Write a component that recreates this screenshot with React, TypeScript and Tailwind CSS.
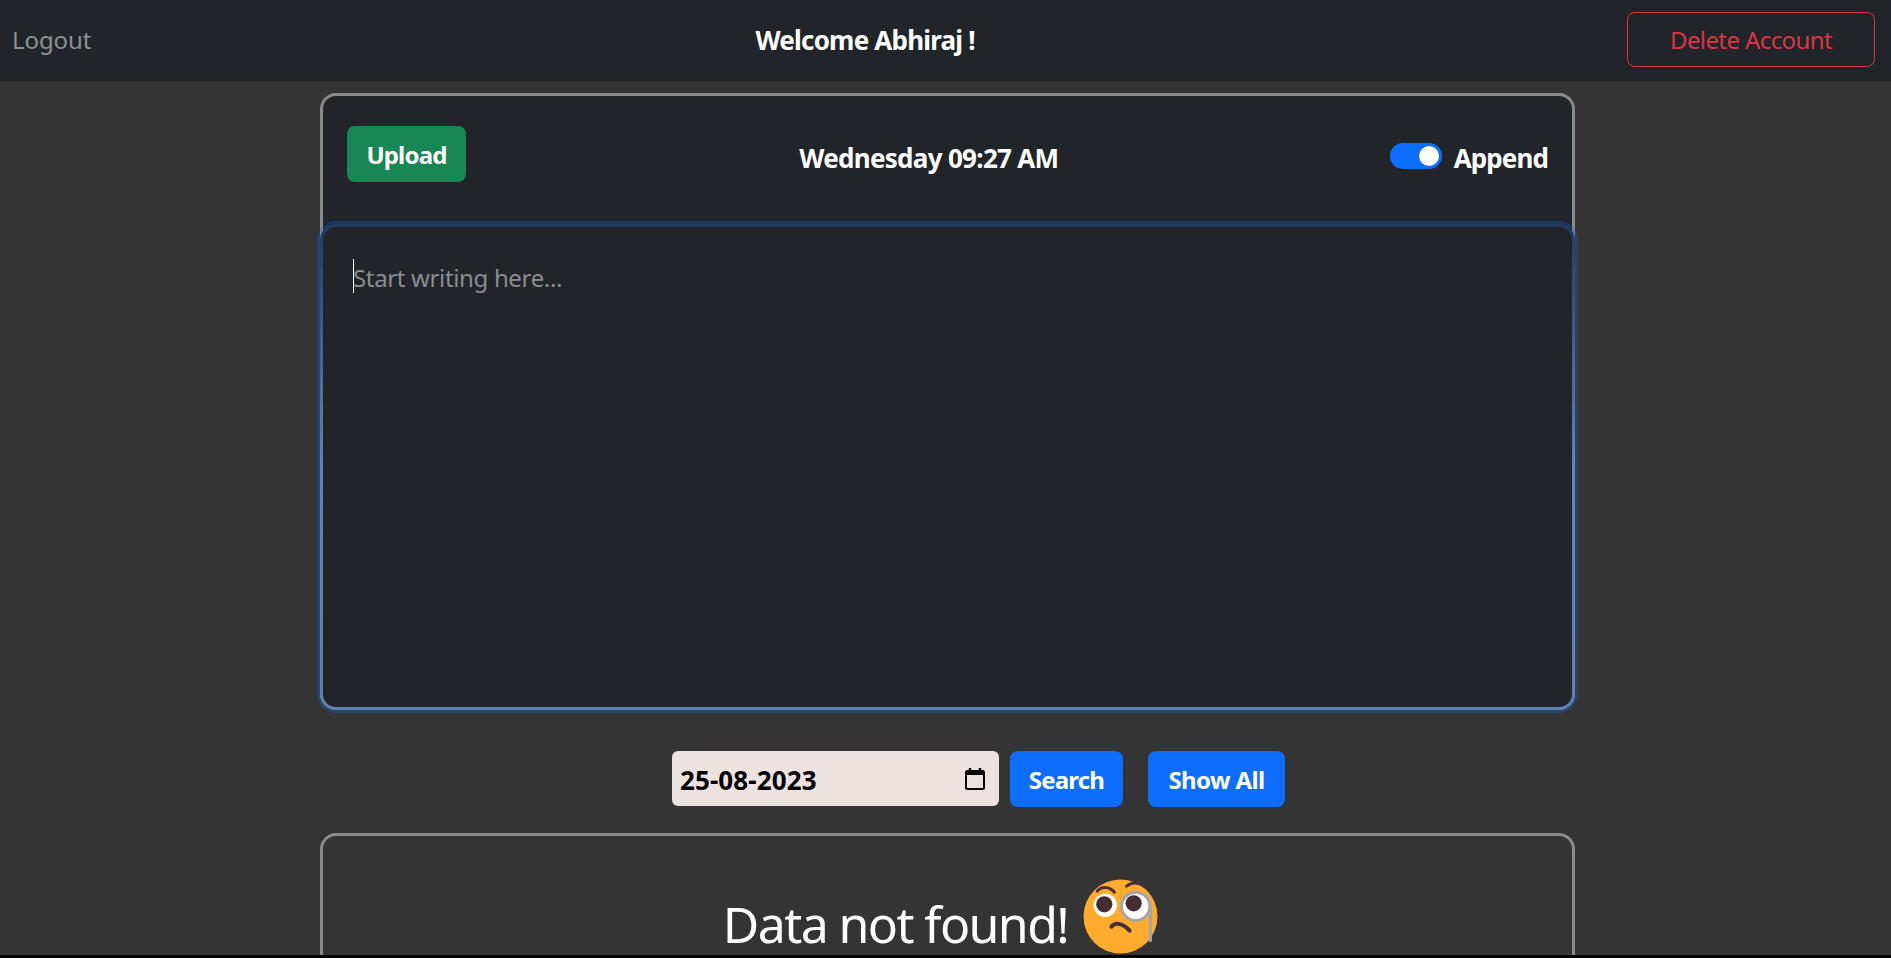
import React from 'react';

const FONT = "font-['Noto_Sans','Open_Sans',sans-serif]";

const MonocleFace = () => (
  <svg width="75" height="75" viewBox="0 0 74 74">
    <ellipse cx="37" cy="37" rx="36.5" ry="36.5" fill="#ffac2e" />
    <path d="M14 12 C18 7 26 7 31 13" fill="none" stroke="#4a2f35" strokeWidth="3" strokeLinecap="round" />
    <path d="M43 7 C48 3 55 3 60 7" fill="none" stroke="#4a2f35" strokeWidth="3" strokeLinecap="round" />
    <circle cx="22" cy="26" r="11.5" fill="#fff" />
    <circle cx="21" cy="25" r="8" fill="#452d36" />
    <circle cx="52" cy="27" r="14" fill="#fff" stroke="#a5a5a5" strokeWidth="3" />
    <circle cx="50" cy="24" r="8" fill="#452d36" />
    <path d="M66.5 28 V62" fill="none" stroke="#a5a5a5" strokeWidth="3" />
    <path d="M28 47 C32 42 40 44 46 51" fill="none" stroke="#4a2f35" strokeWidth="4" strokeLinecap="round" />
  </svg>
);

const CalendarIcon = () => (
  <svg width="20" height="22" viewBox="0 0 20 22">
    <path d="M5 0 V4 M15 0 V4" stroke="#000" strokeWidth="2.4" fill="none" />
    <rect x="1" y="3" width="18" height="18" rx="1.5" fill="#ece3e1" stroke="#000" strokeWidth="2" />
    <rect x="1" y="2.5" width="18" height="4.5" fill="#000" />
  </svg>
);

export default function App() {
  return (
    <div className={`${FONT} h-[958px] overflow-hidden flex flex-col bg-[#343434]`}>
      <div className="flex-1 min-h-0 overflow-hidden">
        {/* Navbar */}
        <nav className="h-[81px] bg-[#212529] flex items-center justify-between pl-3 pr-4 pb-[2px]">
          <a className="text-[24px] leading-9 text-[#8e9092] tracking-[-0.1px]">Logout</a>
          <span className="ml-3 mt-[2px] text-[26px] font-bold text-white tracking-[-0.8px]">Welcome Abhiraj !</span>
          <button className="w-[248px] h-[55px] rounded-lg border border-[#dc3545] text-[#dc3545] text-[24px] tracking-[-0.6px]">
            Delete Account
          </button>
        </nav>

        {/* Editor card */}
        <section className="w-[1255px] ml-[320px] mt-3 border-[3px] border-[#8a8a8a] rounded-2xl bg-[#212529]">
          <div className="h-[128px] flex items-center justify-between pl-6 pr-6 pb-[9px]">
            <button className="w-[119px] h-[56px] -mt-[4px] pt-[2px] rounded-lg bg-[#198754] text-white font-bold text-[24px] tracking-[-0.8px]">
              Upload
            </button>
            <span className="text-[26px] font-bold text-white tracking-[-0.7px] mt-[5px] ml-[2px]">Wednesday 09:27 AM</span>
            <div className="flex items-center gap-[12px]">
              <span className="w-[52px] h-[26px] mt-[1px] rounded-full bg-[#0d6efd] flex items-center justify-end pr-[3px]">
                <span className="w-5 h-5 rounded-full bg-white" />
              </span>
              <span className="text-[26px] font-bold text-white tracking-[-0.9px] mt-[6px]">Append</span>
            </div>
          </div>
          <div className="relative -mx-[3px] -mb-[3px]">
            <textarea
              readOnly
              placeholder="Start writing here..."
              className={`${FONT} block w-full h-[486px] resize-none rounded-2xl border-[3px] border-transparent [background:linear-gradient(#212529,#212529)_padding-box,linear-gradient(#223a60,#3c5a86_20%,#6085bb_50%,#5f80b0)_border-box] pt-[33px] pl-[30px] text-[24px] leading-9 tracking-[-0.35px] text-white placeholder:text-[#8b8d90] shadow-[0_0_0_3px_rgba(13,110,253,0.25)] outline-none`}
            />
            <span className="absolute left-[33px] top-[35px] h-[34px] w-px bg-white" />
          </div>
        </section>

        {/* Date search */}
        <div className="flex items-start mt-[41px] ml-[672px]">
          <div className="w-[327px] h-[55px] rounded-md bg-[#ece3e1] flex items-center justify-between pl-2 pr-[14px] text-black font-bold text-[26px] tracking-[0.1px]">
            <span className="mt-[4px]">25-08-2023</span>
            <CalendarIcon />
          </div>
          <button className="ml-[11px] w-[113px] h-[56px] pt-[2px] rounded-lg bg-[#0d6efd] text-white font-bold text-[24px] tracking-[-0.8px]">
            Search
          </button>
          <button className="ml-[25px] w-[137px] h-[56px] pt-[2px] rounded-lg bg-[#0d6efd] text-white font-bold text-[24px] tracking-[-0.6px]">
            Show All
          </button>
        </div>

        {/* Result card */}
        <section className="w-[1255px] ml-[320px] mt-[26px] h-[200px] border-[3px] border-[#8a8a8a] rounded-2xl">
          <div className="flex items-start justify-center gap-[15px] pt-[43px] pr-[14px]">
            <h1 className="text-[50px] leading-[56px] mt-[17px] text-white font-normal tracking-[-1.6px]">Data not found!</h1>
            <MonocleFace />
          </div>
        </section>
      </div>
      <div className="h-[3px] bg-black" />
    </div>
  );
}
